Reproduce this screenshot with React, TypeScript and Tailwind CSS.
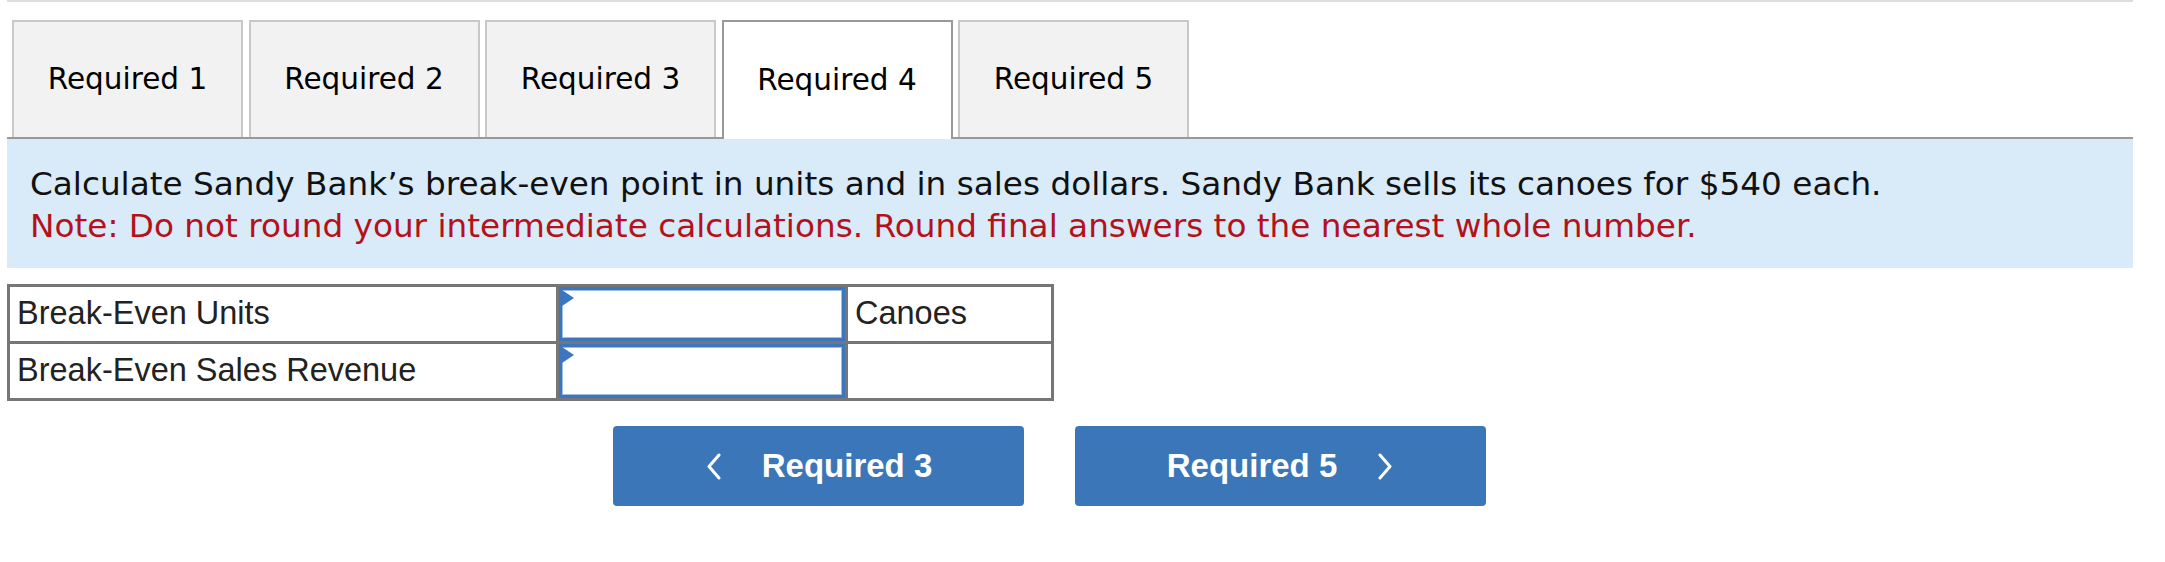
import React from 'react';

const tabs = ['Required 1', 'Required 2', 'Required 3', 'Required 4', 'Required 5'];
const active = 3;

function Chevron({ dir }: { dir: 'left' | 'right' }) {
  return (
    <svg width="17" height="27" viewBox="0 0 17 27" fill="none">
      <path
        d={dir === 'left' ? 'M14 2 L4 13.5 L14 25' : 'M3 2 L13 13.5 L3 25'}
        stroke="white"
        strokeWidth="3"
        strokeLinecap="round"
        strokeLinejoin="round"
      />
    </svg>
  );
}

function AnswerCell() {
  return (
    <td className="p-0 border-[3px] border-[#767676] w-[289px] h-[57px]">
      <div className="relative h-full w-full border-[3px] border-[#3b76be]">
        <div className="h-full w-full border border-[#9dbde6] bg-white" />
        <div className="absolute left-0 top-0 w-0 h-0 border-t-[8px] border-b-[8px] border-l-[12px] border-t-transparent border-b-transparent border-l-[#3b76be]" />
      </div>
    </td>
  );
}

export default function App() {
  return (
    <div className="w-[2165px] h-[562px] bg-white overflow-hidden">
      <div className="ml-[7px] w-[2126px]">
        <div className="h-[2px] bg-[#dddddd]" />

        <div className="mt-[18px] flex items-end gap-[5.5px] pl-[5px] border-b-2 border-[#999999] font-['DejaVu_Sans',sans-serif] text-[29.5px] text-black">
          {tabs.map((t, i) =>
            i === active ? (
              <div
                key={t}
                className="w-[231px] h-[119px] -mb-[2px] flex items-center justify-center bg-white border-2 border-b-0 border-[#999999]"
              >
                {t}
              </div>
            ) : (
              <div
                key={t}
                className="w-[231px] h-[117px] flex items-center justify-center bg-[#f2f2f2] border-2 border-b-0 border-[#c8c8c8]"
              >
                {t}
              </div>
            )
          )}
        </div>

        <div className="bg-[#d9eaf8] pl-[23px] pt-[25px] pb-[21px] font-['DejaVu_Sans',sans-serif] text-[32.7px] leading-[41.6px]">
          <p className="text-[#111111]">
            Calculate Sandy Bank’s break-even point in units and in sales dollars. Sandy Bank sells its canoes for $540 each.
          </p>
          <p className="text-[#b3121b]">
            Note: Do not round your intermediate calculations. Round final answers to the nearest whole number.
          </p>
        </div>

        <table className="mt-[16px] border-collapse font-['Liberation_Sans',Arial,sans-serif] text-[32.5px] leading-[1.1] text-[#222222]">
          <tbody>
            <tr>
              <td className="border-[3px] border-[#767676] w-[549px] h-[57px] pl-[7px] align-middle">Break-Even Units</td>
              <AnswerCell />
              <td className="border-[3px] border-[#767676] w-[206px] h-[57px] pl-[7px] align-middle">Canoes</td>
            </tr>
            <tr>
              <td className="border-[3px] border-[#767676] w-[549px] h-[57px] pl-[7px] align-middle">Break-Even Sales Revenue</td>
              <AnswerCell />
              <td className="border-[3px] border-[#767676] w-[206px] h-[57px]" />
            </tr>
          </tbody>
        </table>

        <div className="mt-[25px] ml-[606px] flex gap-[51px] font-['Liberation_Sans',Arial,sans-serif] font-bold text-[33px] text-white">
          <button className="w-[411px] h-[80px] rounded-[4px] bg-[#3b76b9] flex items-center justify-center gap-[40px]">
            <Chevron dir="left" />
            <span>Required 3</span>
          </button>
          <button className="w-[411px] h-[80px] rounded-[4px] bg-[#3b76b9] flex items-center justify-center gap-[40px]">
            <span>Required 5</span>
            <Chevron dir="right" />
          </button>
        </div>
      </div>
    </div>
  );
}
